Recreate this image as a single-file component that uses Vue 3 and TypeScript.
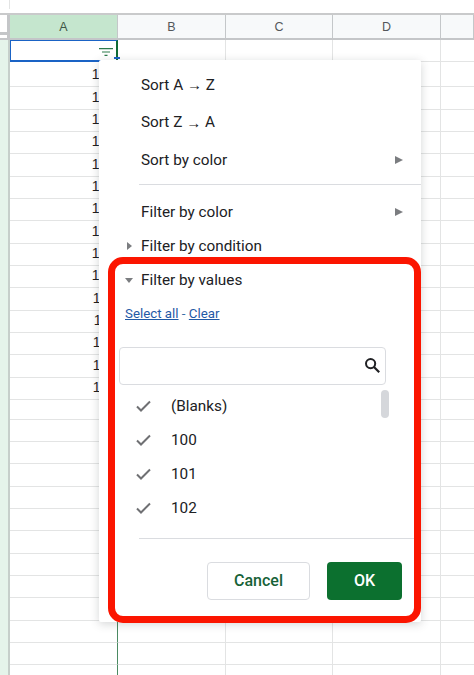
<template>
  <div class="sheet">
    <div class="top-strip"></div>
    <div class="col-head">
      <div class="corner"></div>
      <div class="head active">A</div>
      <div class="head">B</div>
      <div class="head">C</div>
      <div class="head">D</div>
      <div class="head"></div>
    </div>

    <div v-for="(val, i) in rows" :key="i" class="row">
      <div class="gutter"></div>
      <div class="cell a" :class="{ selected: i === 0 }">
        {{ val }}
        <svg v-if="i === 0" class="filter-icon" width="14" height="8" viewBox="0 0 14 8">
          <path d="M0 .7h14M3 4h8M5.5 7.3h3" stroke="#2c7a4b" stroke-width="1.2" fill="none" />
        </svg>
        <span v-if="i === 0" class="handle"></span>
      </div>
      <div class="cell"></div>
      <div class="cell"></div>
      <div class="cell"></div>
      <div class="cell last"></div>
    </div>

    <div class="menu">
      <div class="item first">Sort A <span class="to">→</span> Z</div>
      <div class="item">Sort Z <span class="to">→</span> A</div>
      <div class="item sub">Sort by color <span class="arrow"></span></div>
      <div class="sep top-sep"></div>
      <div class="item sub tall">Filter by color <span class="arrow"></span></div>
      <div class="item toggle"><span class="tri right"></span>Filter by condition</div>
      <div class="item toggle"><span class="tri down"></span>Filter by values</div>
      <div class="links"><a href="#">Select all</a> - <a href="#">Clear</a></div>
      <div class="search">
        <svg width="17" height="17" viewBox="0 0 17 17">
          <circle cx="6.6" cy="6.6" r="4.6" fill="none" stroke="#202124" stroke-width="2" />
          <path d="M10 10l5.2 5.2" stroke="#202124" stroke-width="2.2" />
        </svg>
      </div>
      <div class="values">
        <div v-for="v in values" :key="v" class="value">
          <svg width="15" height="12" viewBox="0 0 15 12">
            <path d="M1 6.5l4 4L14 1.5" fill="none" stroke="#6f7073" stroke-width="2" />
          </svg>
          <span>{{ v }}</span>
        </div>
        <div class="thumb"></div>
      </div>
      <div class="sep list-sep"></div>
      <div class="actions">
        <button type="button" class="btn-cancel">Cancel</button>
        <button type="button" class="btn-ok">OK</button>
      </div>
    </div>

    <div class="highlight"></div>
  </div>
</template>

<script setup lang="ts">
const rows: string[] = ['']
for (let n = 100; n < 115; n++) rows.push(String(n))
while (rows.length < 30) rows.push('')

const values = ['(Blanks)', '100', '101', '102']
</script>

<style scoped>
.sheet {
  position: relative;
  width: 474px;
  height: 675px;
  overflow: hidden;
  background: #fff;
  font-family: "Liberation Sans", Arial, sans-serif;
}

.top-strip {
  width: 10px;
  height: 9px;
  margin-bottom: 4px;
  box-sizing: border-box;
  border-right: 1px solid #e3e4e4;
}

.col-head,
.row {
  display: grid;
  grid-template-columns: 10px 108px 108px 107px 108px 33px;
}

.col-head {
  height: 27px;
  box-sizing: border-box;
  border-top: 2px solid #c9cacb;
  border-bottom: 2px solid #c4c6c8;
}

.corner {
  position: relative;
  background: #fff;
  border-right: 3px solid #c4c6c8;
}

.corner::after {
  content: "";
  position: absolute;
  left: 0;
  right: 0;
  bottom: 3px;
  height: 3px;
  background: #c4c6c8;
}

.head {
  display: flex;
  align-items: center;
  justify-content: center;
  background: #f7f9fa;
  border-right: 1px solid #c4c7c9;
  color: #53575a;
  font-size: 12.5px;
}

.head.active {
  background: #c5e6ce;
  color: #3f5547;
}

.row {
  height: 22.33px;
}

.gutter {
  background: #e5f4ea;
  border-right: 2px solid #c6cfca;
}

.cell {
  position: relative;
  box-sizing: border-box;
  border-right: 1px solid #e3e4e4;
  border-bottom: 1px solid #e3e4e4;
  padding-right: 2px;
  color: #1d1d1d;
  font-size: 14px;
  line-height: 24px;
  text-align: right;
}

.cell.a {
  border-right: 1px solid #4a8a62;
}

.cell.last {
  border-right: none;
}

.cell.selected {
  border-style: solid;
  border-width: 1px 2px 2px 1px;
  border-color: #1a63c5 #0f6b35 #1a63c5 #1a63c5;
}

.filter-icon {
  position: absolute;
  top: 7px;
  right: 3px;
}

.handle {
  position: absolute;
  right: -4px;
  bottom: 1px;
  width: 6px;
  height: 2px;
  background: #1a63c5;
}

.menu {
  position: absolute;
  left: 99px;
  top: 60px;
  width: 322px;
  height: 562px;
  border-radius: 2px;
  background: #fff;
  box-shadow: 0 2px 10px rgba(60, 64, 67, 0.22);
  color: #202124;
  font-family: Roboto, Arial, sans-serif;
  font-size: 15.3px;
}

.item {
  display: flex;
  align-items: center;
  height: 37.5px;
  padding-left: 42px;
  padding-right: 18px;
  white-space: pre-wrap;
}

.to {
  font-family: "Liberation Sans", Arial, sans-serif;
  font-size: 15px;
}

.item.first {
  margin-top: 6px;
}

.item.sub {
  justify-content: space-between;
}

.item.tall {
  height: 34px;
  margin-top: 10px;
}

.item.toggle {
  position: relative;
  height: 34px;
}

.arrow {
  width: 0;
  height: 0;
  border-left: 8px solid #7b7d80;
  border-top: 4.5px solid transparent;
  border-bottom: 4.5px solid transparent;
}

.tri {
  position: absolute;
  width: 0;
  height: 0;
}

.tri.right {
  left: 28px;
  top: 13px;
  border-left: 5px solid #7b7d80;
  border-top: 4px solid transparent;
  border-bottom: 4px solid transparent;
}

.tri.down {
  left: 26px;
  top: 15px;
  border-top: 5px solid #7b7d80;
  border-left: 4px solid transparent;
  border-right: 4px solid transparent;
}

.sep {
  height: 1px;
  margin-left: 40px;
  background: #dadce0;
}

.top-sep {
  margin-top: 5px;
}

.links {
  height: 34px;
  padding-left: 26px;
  box-sizing: border-box;
  line-height: 34px;
  font-size: 13.3px;
  color: #3b6ea8;
}

.links a {
  color: #1f5aa6;
}

.search {
  display: flex;
  align-items: center;
  justify-content: flex-end;
  height: 38px;
  width: 267px;
  margin: 16px 0 0 20px;
  padding-right: 4px;
  box-sizing: border-box;
  border: 1px solid #dadce0;
  border-radius: 4px;
}

.values {
  position: relative;
  margin-top: 4px;
  height: 136px;
}

.value {
  display: flex;
  align-items: center;
  height: 34px;
  padding-left: 37px;
}

.value span {
  margin-left: 20px;
}

.thumb {
  position: absolute;
  left: 282px;
  top: 1px;
  width: 8px;
  height: 28px;
  border-radius: 4px;
  background: #d5d7db;
}

.list-sep {
  margin-top: 13px;
}

.actions {
  display: flex;
  justify-content: flex-end;
  gap: 17px;
  margin-top: 23px;
  padding-right: 19px;
}

.actions button {
  height: 38px;
  border-radius: 4px;
  font-family: Roboto, Arial, sans-serif;
  font-size: 16px;
  font-weight: 500;
}

.btn-cancel {
  width: 103px;
  background: #fff;
  border: 1px solid #dadce0;
  color: #176237;
}

.btn-ok {
  width: 75px;
  background: #0c702f;
  border: none;
  color: #fff;
}

.highlight {
  position: absolute;
  left: 108px;
  top: 257px;
  width: 313px;
  height: 366px;
  box-sizing: border-box;
  border: 7px solid #fb1500;
  border-radius: 15px;
}
</style>
